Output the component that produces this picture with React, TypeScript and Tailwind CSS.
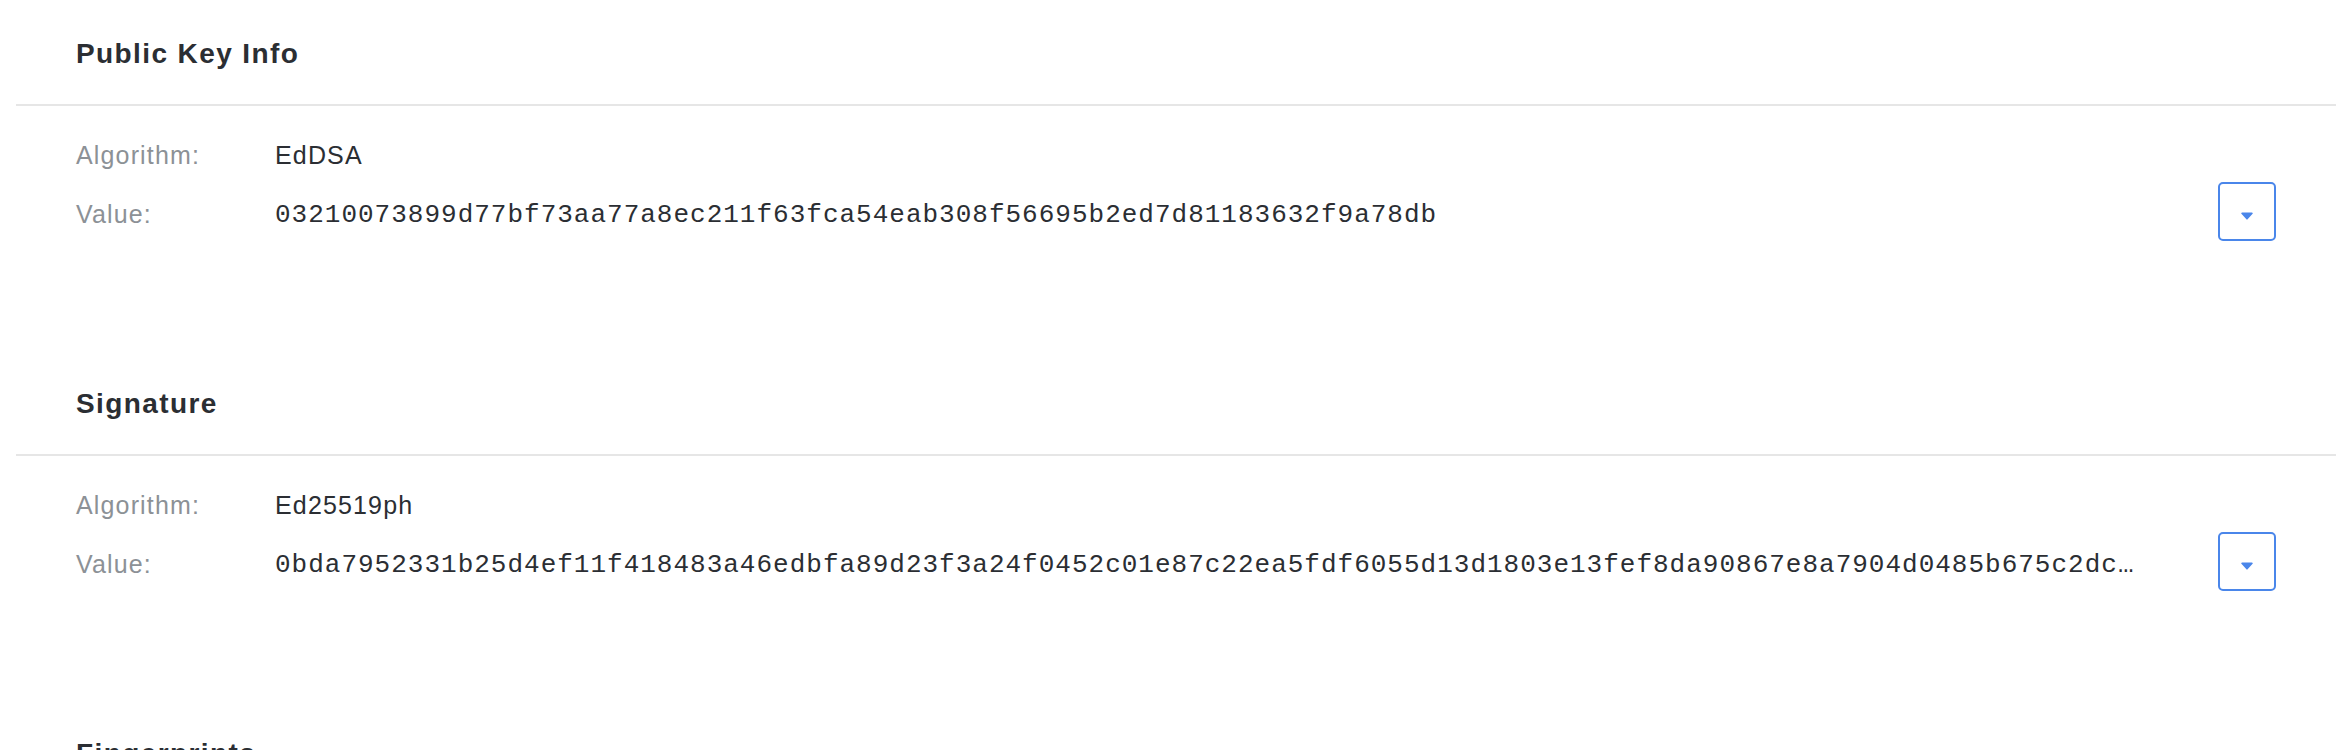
type Section = {
  title: string
  algorithm: string
  value: string
}

const sections: Section[] = [
  {
    title: "Public Key Info",
    algorithm: "EdDSA",
    value: "03210073899d77bf73aa77a8ec211f63fca54eab308f56695b2ed7d81183632f9a78db",
  },
  {
    title: "Signature",
    algorithm: "Ed25519ph",
    value:
      "0bda7952331b25d4ef11f418483a46edbfa89d23f3a24f0452c01e87c22ea5fdf6055d13d1803e13fef8da90867e8a7904d0485b675c2dc5e3b1a09f7d6c4e2",
  },
]

function ExpandButton() {
  return (
    <button
      type="button"
      className="flex h-[59px] w-[58px] shrink-0 items-center justify-center rounded-[5px] border-2 border-[#4a86ea] bg-white"
    >
      <svg width="12" height="8" viewBox="0 0 12 8" className="mt-[9px]">
        <path d="M1 0.5h10a0.8 0.8 0 0 1 0.6 1.3L6.6 7.3a0.8 0.8 0 0 1-1.2 0L0.4 1.8A0.8 0.8 0 0 1 1 0.5z" fill="#4a86ea" />
      </svg>
    </button>
  )
}

function InfoSection({ section }: { section: Section }) {
  return (
    <section className="h-[350px]">
      <h2 className="px-[60px] pt-[34px] text-[28px] font-bold leading-[40px] tracking-[1.4px] text-[#2b2e33]">
        {section.title}
      </h2>
      <div className="mt-[30px] h-[2px] bg-[#e6e6e6]" />

      <div className="px-[60px] pt-[34px]">
        {/* Algorithm */}
        <div className="flex h-[30px] items-center text-[25px] leading-[30px] tracking-[1.15px]">
          <span className="w-[199px] shrink-0 text-[#8c9196]">Algorithm:</span>
          <span className="text-[#2b2e33]">{section.algorithm}</span>
        </div>

        {/* Value */}
        <div className="mt-[12px] flex items-start">
          <span className="w-[199px] shrink-0 pt-[17px] text-[25px] leading-[30px] tracking-[1.15px] text-[#8c9196]">
            Value:
          </span>
          <span className="mr-[80px] min-w-0 flex-1 truncate pt-[19px] font-['Liberation_Mono',monospace] text-[26px] leading-[29px] tracking-[1px] text-[#2b2e33]">
            {section.value}
          </span>
          <ExpandButton />
        </div>
      </div>
    </section>
  )
}

export default function App() {
  return (
    <div className="h-[750px] overflow-hidden bg-white px-4 font-['Liberation_Sans',Arial,sans-serif]">
      {sections.map((s) => (
        <InfoSection key={s.title} section={s} />
      ))}
      <h2 className="px-[60px] pt-[34px] text-[28px] font-bold leading-[40px] tracking-[1.4px] text-[#2b2e33]">
        Fingerprints
      </h2>
    </div>
  )
}
